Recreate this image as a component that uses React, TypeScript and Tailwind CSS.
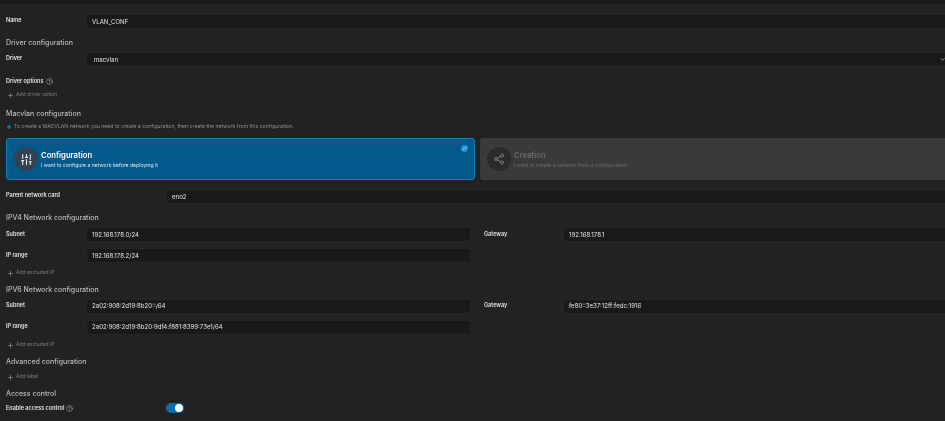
import { Check, CircleHelp, Plus, Share2, SlidersVertical, ChevronDown } from 'lucide-react';

function Field({ value, className = '' }: { value: string; className?: string }) {
  return (
    <div className={`flex h-[15px] items-center rounded-[3px] border border-[#262626] bg-[#191919] pl-[5px] text-[6.1px] text-[#e4e4e4] ${className}`}>
      {value}
    </div>
  );
}

function Label({ children, className = '' }: { children: React.ReactNode; className?: string }) {
  return <div className={`flex items-center gap-[2px] text-[5.5px] font-semibold text-[#e2e2e2] ${className}`}>{children}</div>;
}

function Heading({ children, className = '' }: { children: React.ReactNode; className?: string }) {
  return <div className={`text-[7px] leading-[10px] font-medium text-[#b9b9b9] ${className}`}>{children}</div>;
}

function AddLink({ children, className = '' }: { children: React.ReactNode; className?: string }) {
  return (
    <div className={`flex h-[8px] items-center gap-[2px] pl-[1px] text-[5px] text-[#7c7c7c] ${className}`}>
      <Plus size={7} strokeWidth={2} className="text-[#a4a4a4]" />
      {children}
    </div>
  );
}

function NetworkRow({ subnet, gateway, range }: { subnet: string; gateway: string; range: string }) {
  return (
    <div className="grid grid-cols-[80px_385px_13px_79px_1fr] grid-rows-[15px_15px] gap-y-[6px]">
      <Label className="h-[14px]">Subnet</Label>
      <Field value={subnet} />
      <div />
      <Label className="h-[14px]">Gateway</Label>
      <Field value={gateway} />
      <Label className="h-[14px]">IP range</Label>
      <Field value={range} />
    </div>
  );
}

export default function App() {
  return (
    <div className="h-[421px] w-[945px] overflow-hidden bg-[#222222] font-['Inter',sans-serif] blur-[0.35px]">
      <div className="h-[4px] bg-[#1b1b1b]" />
      <div className="w-[965px] pl-[6px]">
        <div className="mt-[10px] flex items-start">
          <Label className="h-[13px] w-[80px]">Name</Label>
          <Field value="VLAN_CONF" className="flex-1" />
        </div>

        <Heading className="mt-[9px]">Driver configuration</Heading>
        <div className="mt-[4px] flex items-start">
          <Label className="h-[13px] w-[80px]">Driver</Label>
          <div className="relative flex-1">
            <Field value="macvlan" className="pl-[7px]" />
            <ChevronDown size={7} className="absolute top-[4px] left-[853px] text-[#dddddd]" />
          </div>
        </div>

        <Label className="mt-[10px] h-[8px]">
          Driver options
          <CircleHelp size={7} strokeWidth={1.5} className="text-[#d0d0d0]" />
        </Label>
        <AddLink className="mt-[6px]">Add driver option</AddLink>

        <Heading className="mt-[10px]">Macvlan configuration</Heading>
        <div className="mt-[4px] flex h-[8px] items-center gap-[3px] pl-[1px] text-[5.15px] text-[#8e8e8e]">
          <span className="h-[4px] w-[4px] rounded-full bg-[#0d6a9c]" />
          To create a MACVLAN network you need to create a configuration, then create the network from this configuration.
        </div>

        <div className="mt-[7px] flex h-[42px] gap-[5px]">
          <div className="relative flex w-[469px] items-center rounded-[3px] border border-[#0b81bd] bg-[#035a8a] pl-[7px]">
            <div className="flex h-[24px] w-[24px] items-center justify-center rounded-full bg-[#334155]">
              <SlidersVertical size={13} className="text-[#e8eef3]" />
            </div>
            <div className="mt-[2px] ml-[3px]">
              <div className="text-[7.7px] leading-[10px] font-semibold text-white">Configuration</div>
              <div className="mt-[1px] text-[5.1px] leading-[7px] text-[#dbe8ef]">I want to configure a network before deploying it</div>
            </div>
            <div className="absolute top-[6px] right-[6px] flex h-[7px] w-[7px] items-center justify-center rounded-full bg-[#1b93d6]">
              <Check size={5} strokeWidth={3} className="text-white" />
            </div>
          </div>
          <div className="flex flex-1 items-center rounded-[3px] bg-[#3a3a3a] pl-[7px]">
            <div className="flex h-[24px] w-[24px] items-center justify-center rounded-full bg-[#2b2b2b]">
              <Share2 size={12} className="text-[#7d7d7d]" />
            </div>
            <div className="mt-[2px] ml-[3px]">
              <div className="text-[7.7px] leading-[10px] font-semibold text-[#6a6a6a]">Creation</div>
              <div className="mt-[1px] text-[5.1px] leading-[7px] text-[#6a6a6a]">I want to create a network from a configuration</div>
            </div>
          </div>
        </div>

        <div className="mt-[9px] flex items-start">
          <Label className="h-[13px] w-[160px]">Parent network card</Label>
          <Field value="eno2" className="flex-1" />
        </div>

        <Heading className="mt-[9px]">IPV4 Network configuration</Heading>
        <div className="mt-[4px]">
          <NetworkRow subnet="192.168.178.0/24" gateway="192.168.178.1" range="192.168.178.2/24" />
        </div>
        <AddLink className="mt-[6px]">Add excluded IP</AddLink>

        <Heading className="mt-[8px]">IPV6 Network configuration</Heading>
        <div className="mt-[3.5px]">
          <NetworkRow
            subnet="2a02:908:2d19:8b20::/64"
            gateway="fe80::3e37:12ff:fedc:1916"
            range="2a02:908:2d19:8b20:9df4:f881:8399:73e1/64"
          />
        </div>
        <AddLink className="mt-[6.5px]">Add excluded IP</AddLink>

        <Heading className="mt-[8px]">Advanced configuration</Heading>
        <AddLink className="mt-[6px]">Add label</AddLink>

        <Heading className="mt-[8px]">Access control</Heading>
        <div className="mt-[4px] flex items-center">
          <Label className="w-[160px]">
            Enable access control
            <CircleHelp size={7} strokeWidth={1.5} className="text-[#d0d0d0]" />
          </Label>
          <div className="flex h-[10px] w-[18px] items-center justify-end rounded-full bg-[#0b6fae] pr-[1px]">
            <span className="h-[8px] w-[8px] rounded-full bg-white" />
          </div>
        </div>
      </div>
    </div>
  );
}
